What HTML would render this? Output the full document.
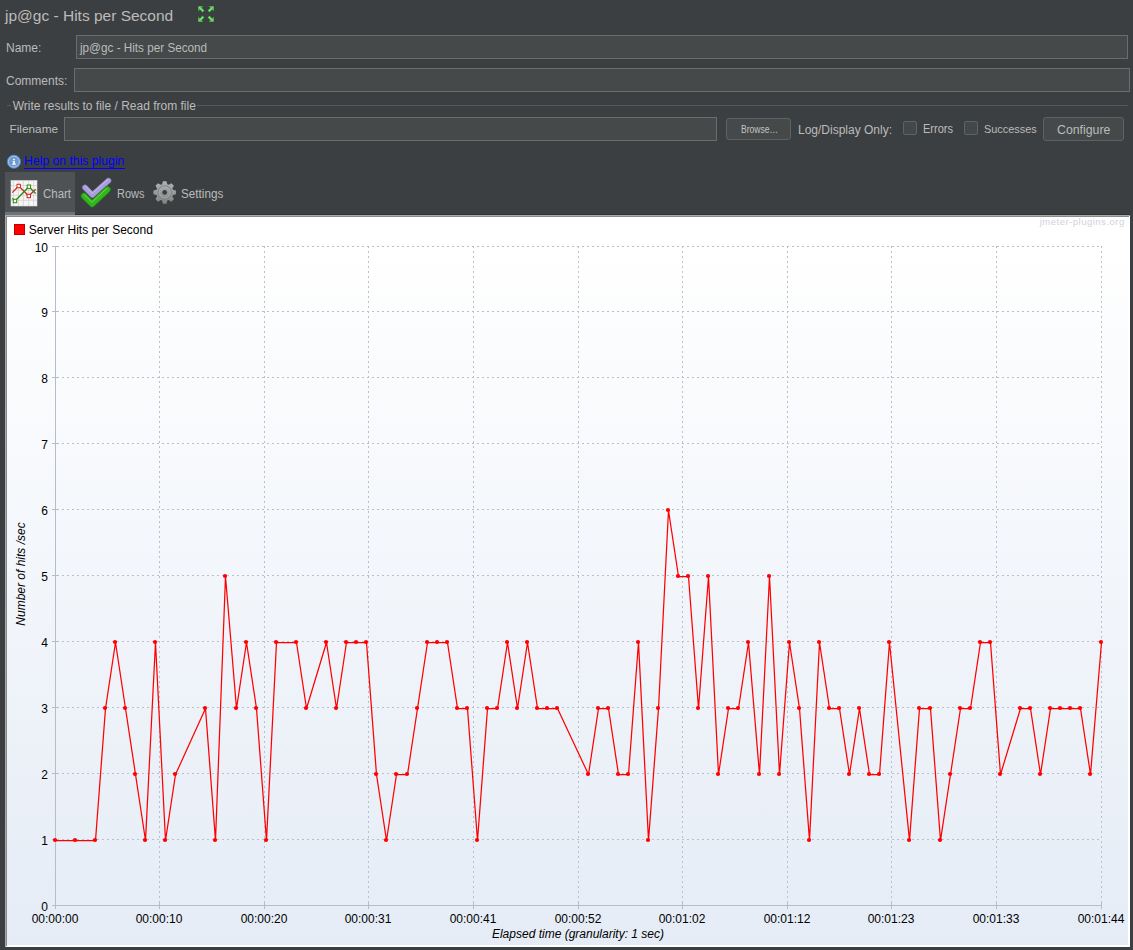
<!DOCTYPE html><html><head><meta charset="utf-8"><style>
html,body{margin:0;padding:0;}
body{width:1133px;height:950px;background:#3c3f41;position:relative;overflow:hidden;font-family:"Liberation Sans", sans-serif;}
.t{position:absolute;white-space:nowrap;}
.b{position:absolute;box-sizing:border-box;}
svg{position:absolute;left:0;top:0;}
</style></head><body>
<div class="t" style="left:5px;top:7.78px;font-size:15.5px;line-height:15.5px;color:#bbbbbb;">jp@gc - Hits per Second</div>
<svg width="1133" height="30" style="left:0;top:0">
<g fill="#5ccb5c" stroke="#2f3a30" stroke-width="0.4">
<path d="M198,6 H203.5 L201.8,7.8 L204.5,10.5 L202.5,12.5 L199.8,9.8 L198,11.5 Z"/>
<path d="M214,6 H208.5 L210.2,7.8 L207.5,10.5 L209.5,12.5 L212.2,9.8 L214,11.5 Z"/>
<path d="M198,22 H203.5 L201.8,20.2 L204.5,17.5 L202.5,15.5 L199.8,18.2 L198,16.5 Z"/>
<path d="M214,22 H208.5 L210.2,20.2 L207.5,17.5 L209.5,15.5 L212.2,18.2 L214,16.5 Z"/>
</g>
<g stroke="#b8ecb0" stroke-width="1" opacity="0.55" stroke-linecap="round">
<line x1="199.5" y1="7.5" x2="202.8" y2="10.8"/>
<line x1="212.5" y1="7.5" x2="209.2" y2="10.8"/>
<line x1="199.5" y1="20.5" x2="202.8" y2="17.2"/>
<line x1="212.5" y1="20.5" x2="209.2" y2="17.2"/>
</g></svg>
<div class="t" style="left:6px;top:41.84px;font-size:12px;line-height:12px;color:#bbbbbb;">Name:</div>
<div class="b" style="left:76px;top:35px;width:1052px;height:24px;background:#45494a;border:1px solid #6b6d6d;"></div>
<div class="t" style="left:80.3px;top:41.84px;font-size:12px;line-height:12px;color:#bbbbbb;transform-origin:0 0;transform:scaleX(0.976);">jp@gc - Hits per Second</div>
<div class="t" style="left:6px;top:74.84px;font-size:12px;line-height:12px;color:#bbbbbb;">Comments:</div>
<div class="b" style="left:74px;top:68px;width:1056px;height:24px;background:#45494a;border:1px solid #6b6d6d;"></div>
<div class="b" style="left:7px;top:105px;width:4px;height:1px;background:#56595b;"></div>
<div class="b" style="left:197px;top:105px;width:931px;height:1px;background:#56595b;"></div>
<div class="t" style="left:12.7px;top:99.94px;font-size:12px;line-height:12px;color:#bbbbbb;">Write results to file / Read from file</div>
<div class="t" style="left:9.5px;top:124.01px;font-size:11.8px;line-height:11.8px;color:#bbbbbb;">Filename</div>
<div class="b" style="left:64px;top:117px;width:653px;height:24px;background:#45494a;border:1px solid #6b6d6d;"></div>
<div class="b" style="left:726px;top:118px;width:65px;height:22px;background:#45494a;border:1px solid #5e6262;border-radius:3px;"></div>
<div class="t" style="left:740.5px;top:124.58px;font-size:10.3px;line-height:10.3px;color:#c4c4c4;transform-origin:0 0;transform:scaleX(0.83);">Browse…</div>
<div class="t" style="left:798px;top:124.24px;font-size:12px;line-height:12px;color:#bbbbbb;">Log/Display Only:</div>
<div class="b" style="left:903px;top:121px;width:14px;height:14px;background:#43494a;border:1px solid #5f6363;border-radius:2px;"></div>
<div class="t" style="left:923px;top:123.04px;font-size:12px;line-height:12px;color:#bbbbbb;transform-origin:0 0;transform:scaleX(0.92);">Errors</div>
<div class="b" style="left:964px;top:121px;width:14px;height:14px;background:#43494a;border:1px solid #5f6363;border-radius:2px;"></div>
<div class="t" style="left:984px;top:123.97px;font-size:10.9px;line-height:10.9px;color:#bbbbbb;">Successes</div>
<div class="b" style="left:1043px;top:117px;width:81px;height:24px;background:#45494a;border:1px solid #5e6262;border-radius:3px;"></div>
<div class="t" style="left:1057px;top:123.69px;font-size:12.3px;line-height:12.3px;color:#bbbbbb;">Configure</div>
<svg width="30" height="30" style="left:0;top:147px">
<circle cx="13.9" cy="14.7" r="6.6" fill="#6f9ad0" stroke="#4a86d0" stroke-width="0.9"/>
<circle cx="13.9" cy="14.7" r="5.5" fill="none" stroke="#b9cbe6" stroke-width="0.9"/>
<rect x="13.1" y="11.8" width="1.7" height="1.3" fill="#fff"/>
<rect x="13.2" y="13.9" width="1.6" height="3.5" fill="#fff"/>
<rect x="12.1" y="16.6" width="3.8" height="1" fill="#fff"/>
<rect x="12.6" y="13.9" width="1" height="0.8" fill="#fff"/>
</svg>
<div class="t" style="left:24.1px;top:155.17px;font-size:12.2px;line-height:12.2px;color:#0000ff;">Help on this plugin</div>
<div class="b" style="left:24px;top:168px;width:101px;height:1px;background:#0000ff;"></div>
<div class="b" style="left:5px;top:172px;width:70px;height:40px;background:#4e5254;"></div>
<div class="b" style="left:5px;top:212px;width:70px;height:3px;background:#6e737a;"></div>
<div class="b" style="left:75px;top:214px;width:1055px;height:1px;background:#2f3133;"></div>
<svg width="40" height="40" style="left:0;top:170px">
<rect x="11" y="10.5" width="26" height="25.5" fill="#f6f6f6" stroke="#dcdcdc" stroke-width="0.6"/>
<g stroke="#d2d2d2" stroke-width="0.8">
<line x1="13.4" y1="10.5" x2="13.4" y2="36"/><line x1="18.4" y1="10.5" x2="18.4" y2="36"/><line x1="23.4" y1="10.5" x2="23.4" y2="36"/><line x1="28.6" y1="10.5" x2="28.6" y2="36"/><line x1="33.6" y1="10.5" x2="33.6" y2="36"/>
<line x1="11" y1="15.5" x2="37" y2="15.5"/><line x1="11" y1="20.3" x2="37" y2="20.3"/><line x1="11" y1="25.3" x2="37" y2="25.3"/><line x1="11" y1="30.3" x2="37" y2="30.3"/>
</g>
<polyline points="12.3,22.6 18.7,16 28.8,26 35.6,19.2" fill="none" stroke="#d42a1e" stroke-width="1.3"/>
<polyline points="12.3,28.2 15,31 28.9,16.7 35.7,23.5" fill="none" stroke="#2e8a10" stroke-width="1.3"/>
<rect x="17" y="14.3" width="3.4" height="3.4" fill="#fff" stroke="#d42a1e" stroke-width="1"/>
<rect x="27.1" y="24.3" width="3.4" height="3.4" fill="#fff" stroke="#d42a1e" stroke-width="1"/>
<rect x="13.3" y="29.3" width="3.4" height="3.4" fill="#fffff0" stroke="#2e8a10" stroke-width="1"/>
<rect x="27.2" y="15" width="3.4" height="3.4" fill="#fffff0" stroke="#2e8a10" stroke-width="1"/>
</svg>
<div class="t" style="left:42.6px;top:187.84px;font-size:12px;line-height:12px;color:#bbbbbb;transform-origin:0 0;transform:scaleX(0.955);">Chart</div>
<svg width="120" height="40" style="left:0;top:170px">
<polyline points="85,17.5 92.4,25 108.5,10.6" fill="none" stroke="#8f84c4" stroke-width="5.6" stroke-linecap="round" stroke-linejoin="round"/>
<polyline points="85,17.5 92.4,25 108.5,10.6" fill="none" stroke="#a99ddb" stroke-width="4.4" stroke-linecap="round" stroke-linejoin="round"/>
<polyline points="85.2,16 92.4,23.4 107.8,9.6" fill="none" stroke="#d8d2f2" stroke-width="0.8" stroke-linecap="round" stroke-linejoin="round" opacity="0.8"/>
<polyline points="84,26 92,34 107.5,19.5" fill="none" stroke="#178a0c" stroke-width="6.6" stroke-linecap="round" stroke-linejoin="round"/>
<polyline points="84,26 92,34 107.5,19.5" fill="none" stroke="#35b420" stroke-width="5.2" stroke-linecap="round" stroke-linejoin="round"/>
<polyline points="84.2,24.4 92,32.2 106.6,18.6" fill="none" stroke="#8ee07a" stroke-width="0.8" stroke-linecap="round" stroke-linejoin="round" opacity="0.8"/>
</svg>
<div class="t" style="left:116.5px;top:187.84px;font-size:12px;line-height:12px;color:#bbbbbb;transform-origin:0 0;transform:scaleX(0.915);">Rows</div>
<svg width="200" height="40" style="left:0;top:170px">
<defs><linearGradient id="gg" x1="0" y1="0" x2="0" y2="1"><stop offset="0" stop-color="#b0b3b3"/><stop offset="1" stop-color="#7f8483"/></linearGradient></defs>
<path d="M162.16,14.18 L162.88,11.15 L166.52,11.15 L167.24,14.18 L168.71,14.79 L171.37,13.16 L173.94,15.73 L172.31,18.39 L172.92,19.86 L175.95,20.58 L175.95,24.22 L172.92,24.94 L172.31,26.41 L173.94,29.07 L171.37,31.64 L168.71,30.01 L167.24,30.62 L166.52,33.65 L162.88,33.65 L162.16,30.62 L160.69,30.01 L158.03,31.64 L155.46,29.07 L157.09,26.41 L156.48,24.94 L153.45,24.22 L153.45,20.58 L156.48,19.86 L157.09,18.39 L155.46,15.73 L158.03,13.16 L160.69,14.79 Z" fill="url(#gg)"/>
<circle cx="164.7" cy="22.400000000000006" r="6.6" fill="none" stroke="#767a7a" stroke-width="0.9"/>
<circle cx="164.7" cy="22.400000000000006" r="5.6" fill="none" stroke="#b4b7b7" stroke-width="0.6"/>
<circle cx="164.7" cy="22.400000000000006" r="2.4" fill="#3c3f41"/>
</svg>
<div class="t" style="left:181px;top:187.84px;font-size:12px;line-height:12px;color:#bbbbbb;transform-origin:0 0;transform:scaleX(0.975);">Settings</div>
<div class="b" style="left:5px;top:215px;width:1125px;height:732px;background:#ffffff;"></div>
<div class="b" style="left:5px;top:215px;width:1125px;height:1px;background:#a9a9a9;"></div>
<div class="b" style="left:5px;top:216px;width:1124px;height:1px;background:#8a8a8a;"></div>
<div class="b" style="left:5px;top:215px;width:1px;height:732px;background:#a9a9a9;"></div>
<div class="b" style="left:6px;top:216px;width:1px;height:730px;background:#8a8a8a;"></div>
<div class="b" style="left:7px;top:242px;width:1121px;height:703px;background:linear-gradient(#ffffff,#e5ecf6);"></div>
<svg width="1133" height="950" style="left:0;top:0">
<line x1="62" y1="246.5" x2="1101" y2="246.5" stroke="#b9c0cb" stroke-width="1" stroke-dasharray="2 3"/>
<line x1="62" y1="311.5" x2="1101" y2="311.5" stroke="#b9c0cb" stroke-width="1" stroke-dasharray="2 3"/>
<line x1="62" y1="377.5" x2="1101" y2="377.5" stroke="#b9c0cb" stroke-width="1" stroke-dasharray="2 3"/>
<line x1="62" y1="443.5" x2="1101" y2="443.5" stroke="#b9c0cb" stroke-width="1" stroke-dasharray="2 3"/>
<line x1="62" y1="509.5" x2="1101" y2="509.5" stroke="#b9c0cb" stroke-width="1" stroke-dasharray="2 3"/>
<line x1="62" y1="575.5" x2="1101" y2="575.5" stroke="#b9c0cb" stroke-width="1" stroke-dasharray="2 3"/>
<line x1="62" y1="641.5" x2="1101" y2="641.5" stroke="#b9c0cb" stroke-width="1" stroke-dasharray="2 3"/>
<line x1="62" y1="707.5" x2="1101" y2="707.5" stroke="#b9c0cb" stroke-width="1" stroke-dasharray="2 3"/>
<line x1="62" y1="773.5" x2="1101" y2="773.5" stroke="#b9c0cb" stroke-width="1" stroke-dasharray="2 3"/>
<line x1="62" y1="839.5" x2="1101" y2="839.5" stroke="#b9c0cb" stroke-width="1" stroke-dasharray="2 3"/>
<line x1="159.5" y1="246" x2="159.5" y2="905" stroke="#b9c0cb" stroke-width="1" stroke-dasharray="2 3"/>
<line x1="264.5" y1="246" x2="264.5" y2="905" stroke="#b9c0cb" stroke-width="1" stroke-dasharray="2 3"/>
<line x1="368.5" y1="246" x2="368.5" y2="905" stroke="#b9c0cb" stroke-width="1" stroke-dasharray="2 3"/>
<line x1="473.5" y1="246" x2="473.5" y2="905" stroke="#b9c0cb" stroke-width="1" stroke-dasharray="2 3"/>
<line x1="578.5" y1="246" x2="578.5" y2="905" stroke="#b9c0cb" stroke-width="1" stroke-dasharray="2 3"/>
<line x1="682.5" y1="246" x2="682.5" y2="905" stroke="#b9c0cb" stroke-width="1" stroke-dasharray="2 3"/>
<line x1="787.5" y1="246" x2="787.5" y2="905" stroke="#b9c0cb" stroke-width="1" stroke-dasharray="2 3"/>
<line x1="891.5" y1="246" x2="891.5" y2="905" stroke="#b9c0cb" stroke-width="1" stroke-dasharray="2 3"/>
<line x1="996.5" y1="246" x2="996.5" y2="905" stroke="#b9c0cb" stroke-width="1" stroke-dasharray="2 3"/>
<line x1="1101.5" y1="246" x2="1101.5" y2="905" stroke="#b9c0cb" stroke-width="1" stroke-dasharray="2 3"/>
<line x1="55.5" y1="246" x2="55.5" y2="909" stroke="#b5bdca" stroke-width="1"/>
<line x1="52" y1="905.5" x2="1102" y2="905.5" stroke="#b5bdca" stroke-width="1"/>
<line x1="52" y1="246.5" x2="59" y2="246.5" stroke="#b5bdca" stroke-width="1"/>
<line x1="52" y1="311.5" x2="59" y2="311.5" stroke="#b5bdca" stroke-width="1"/>
<line x1="52" y1="377.5" x2="59" y2="377.5" stroke="#b5bdca" stroke-width="1"/>
<line x1="52" y1="443.5" x2="59" y2="443.5" stroke="#b5bdca" stroke-width="1"/>
<line x1="52" y1="509.5" x2="59" y2="509.5" stroke="#b5bdca" stroke-width="1"/>
<line x1="52" y1="575.5" x2="59" y2="575.5" stroke="#b5bdca" stroke-width="1"/>
<line x1="52" y1="641.5" x2="59" y2="641.5" stroke="#b5bdca" stroke-width="1"/>
<line x1="52" y1="707.5" x2="59" y2="707.5" stroke="#b5bdca" stroke-width="1"/>
<line x1="52" y1="773.5" x2="59" y2="773.5" stroke="#b5bdca" stroke-width="1"/>
<line x1="52" y1="839.5" x2="59" y2="839.5" stroke="#b5bdca" stroke-width="1"/>
<line x1="52" y1="905.5" x2="59" y2="905.5" stroke="#b5bdca" stroke-width="1"/>
<line x1="55.5" y1="902" x2="55.5" y2="909" stroke="#b5bdca" stroke-width="1"/>
<line x1="159.5" y1="902" x2="159.5" y2="909" stroke="#b5bdca" stroke-width="1"/>
<line x1="264.5" y1="902" x2="264.5" y2="909" stroke="#b5bdca" stroke-width="1"/>
<line x1="368.5" y1="902" x2="368.5" y2="909" stroke="#b5bdca" stroke-width="1"/>
<line x1="473.5" y1="902" x2="473.5" y2="909" stroke="#b5bdca" stroke-width="1"/>
<line x1="578.5" y1="902" x2="578.5" y2="909" stroke="#b5bdca" stroke-width="1"/>
<line x1="682.5" y1="902" x2="682.5" y2="909" stroke="#b5bdca" stroke-width="1"/>
<line x1="787.5" y1="902" x2="787.5" y2="909" stroke="#b5bdca" stroke-width="1"/>
<line x1="891.5" y1="902" x2="891.5" y2="909" stroke="#b5bdca" stroke-width="1"/>
<line x1="996.5" y1="902" x2="996.5" y2="909" stroke="#b5bdca" stroke-width="1"/>
<line x1="1101.5" y1="902" x2="1101.5" y2="909" stroke="#b5bdca" stroke-width="1"/>
<polyline fill="none" stroke="#ff0000" stroke-width="1.25" stroke-linejoin="round" points="55.5,840.5 75.5,840.5 95.5,840.5 105.5,708.5 115.5,642.5 125.5,708.5 135.5,774.5 145.5,840.5 155.5,642.5 165.5,840.5 175.5,774.5 205.5,708.5 215.5,840.5 225.5,576.5 236.5,708.5 246.5,642.5 256.5,708.5 266.5,840.5 276.5,642.5 296.5,642.5 306.5,708.5 326.5,642.5 336.5,708.5 346.5,642.5 356.5,642.5 366.5,642.5 376.5,774.5 386.5,840.5 396.5,774.5 407.5,774.5 417.5,708.5 427.5,642.5 437.5,642.5 447.5,642.5 457.5,708.5 467.5,708.5 477.5,840.5 487.5,708.5 497.5,708.5 507.5,642.5 517.5,708.5 527.5,642.5 537.5,708.5 547.5,708.5 557.5,708.5 588.5,774.5 598.5,708.5 608.5,708.5 618.5,774.5 628.5,774.5 638.5,642.5 648.5,840.5 658.5,708.5 668.5,510.5 678.5,576.5 688.5,576.5 698.5,708.5 708.5,576.5 718.5,774.5 728.5,708.5 738.5,708.5 748.5,642.5 759.5,774.5 769.5,576.5 779.5,774.5 789.5,642.5 799.5,708.5 809.5,840.5 819.5,642.5 829.5,708.5 839.5,708.5 849.5,774.5 859.5,708.5 869.5,774.5 879.5,774.5 889.5,642.5 909.5,840.5 919.5,708.5 930.5,708.5 940.5,840.5 950.5,774.5 960.5,708.5 970.5,708.5 980.5,642.5 990.5,642.5 1000.5,774.5 1020.5,708.5 1030.5,708.5 1040.5,774.5 1050.5,708.5 1060.5,708.5 1070.5,708.5 1080.5,708.5 1090.5,774.5 1101.5,642.5"/>
<circle cx="55" cy="840" r="2.1" fill="#ff0000"/>
<circle cx="75" cy="840" r="2.1" fill="#ff0000"/>
<circle cx="95" cy="840" r="2.1" fill="#ff0000"/>
<circle cx="105" cy="708" r="2.1" fill="#ff0000"/>
<circle cx="115" cy="642" r="2.1" fill="#ff0000"/>
<circle cx="125" cy="708" r="2.1" fill="#ff0000"/>
<circle cx="135" cy="774" r="2.1" fill="#ff0000"/>
<circle cx="145" cy="840" r="2.1" fill="#ff0000"/>
<circle cx="155" cy="642" r="2.1" fill="#ff0000"/>
<circle cx="165" cy="840" r="2.1" fill="#ff0000"/>
<circle cx="175" cy="774" r="2.1" fill="#ff0000"/>
<circle cx="205" cy="708" r="2.1" fill="#ff0000"/>
<circle cx="215" cy="840" r="2.1" fill="#ff0000"/>
<circle cx="225" cy="576" r="2.1" fill="#ff0000"/>
<circle cx="236" cy="708" r="2.1" fill="#ff0000"/>
<circle cx="246" cy="642" r="2.1" fill="#ff0000"/>
<circle cx="256" cy="708" r="2.1" fill="#ff0000"/>
<circle cx="266" cy="840" r="2.1" fill="#ff0000"/>
<circle cx="276" cy="642" r="2.1" fill="#ff0000"/>
<circle cx="296" cy="642" r="2.1" fill="#ff0000"/>
<circle cx="306" cy="708" r="2.1" fill="#ff0000"/>
<circle cx="326" cy="642" r="2.1" fill="#ff0000"/>
<circle cx="336" cy="708" r="2.1" fill="#ff0000"/>
<circle cx="346" cy="642" r="2.1" fill="#ff0000"/>
<circle cx="356" cy="642" r="2.1" fill="#ff0000"/>
<circle cx="366" cy="642" r="2.1" fill="#ff0000"/>
<circle cx="376" cy="774" r="2.1" fill="#ff0000"/>
<circle cx="386" cy="840" r="2.1" fill="#ff0000"/>
<circle cx="396" cy="774" r="2.1" fill="#ff0000"/>
<circle cx="407" cy="774" r="2.1" fill="#ff0000"/>
<circle cx="417" cy="708" r="2.1" fill="#ff0000"/>
<circle cx="427" cy="642" r="2.1" fill="#ff0000"/>
<circle cx="437" cy="642" r="2.1" fill="#ff0000"/>
<circle cx="447" cy="642" r="2.1" fill="#ff0000"/>
<circle cx="457" cy="708" r="2.1" fill="#ff0000"/>
<circle cx="467" cy="708" r="2.1" fill="#ff0000"/>
<circle cx="477" cy="840" r="2.1" fill="#ff0000"/>
<circle cx="487" cy="708" r="2.1" fill="#ff0000"/>
<circle cx="497" cy="708" r="2.1" fill="#ff0000"/>
<circle cx="507" cy="642" r="2.1" fill="#ff0000"/>
<circle cx="517" cy="708" r="2.1" fill="#ff0000"/>
<circle cx="527" cy="642" r="2.1" fill="#ff0000"/>
<circle cx="537" cy="708" r="2.1" fill="#ff0000"/>
<circle cx="547" cy="708" r="2.1" fill="#ff0000"/>
<circle cx="557" cy="708" r="2.1" fill="#ff0000"/>
<circle cx="588" cy="774" r="2.1" fill="#ff0000"/>
<circle cx="598" cy="708" r="2.1" fill="#ff0000"/>
<circle cx="608" cy="708" r="2.1" fill="#ff0000"/>
<circle cx="618" cy="774" r="2.1" fill="#ff0000"/>
<circle cx="628" cy="774" r="2.1" fill="#ff0000"/>
<circle cx="638" cy="642" r="2.1" fill="#ff0000"/>
<circle cx="648" cy="840" r="2.1" fill="#ff0000"/>
<circle cx="658" cy="708" r="2.1" fill="#ff0000"/>
<circle cx="668" cy="510" r="2.1" fill="#ff0000"/>
<circle cx="678" cy="576" r="2.1" fill="#ff0000"/>
<circle cx="688" cy="576" r="2.1" fill="#ff0000"/>
<circle cx="698" cy="708" r="2.1" fill="#ff0000"/>
<circle cx="708" cy="576" r="2.1" fill="#ff0000"/>
<circle cx="718" cy="774" r="2.1" fill="#ff0000"/>
<circle cx="728" cy="708" r="2.1" fill="#ff0000"/>
<circle cx="738" cy="708" r="2.1" fill="#ff0000"/>
<circle cx="748" cy="642" r="2.1" fill="#ff0000"/>
<circle cx="759" cy="774" r="2.1" fill="#ff0000"/>
<circle cx="769" cy="576" r="2.1" fill="#ff0000"/>
<circle cx="779" cy="774" r="2.1" fill="#ff0000"/>
<circle cx="789" cy="642" r="2.1" fill="#ff0000"/>
<circle cx="799" cy="708" r="2.1" fill="#ff0000"/>
<circle cx="809" cy="840" r="2.1" fill="#ff0000"/>
<circle cx="819" cy="642" r="2.1" fill="#ff0000"/>
<circle cx="829" cy="708" r="2.1" fill="#ff0000"/>
<circle cx="839" cy="708" r="2.1" fill="#ff0000"/>
<circle cx="849" cy="774" r="2.1" fill="#ff0000"/>
<circle cx="859" cy="708" r="2.1" fill="#ff0000"/>
<circle cx="869" cy="774" r="2.1" fill="#ff0000"/>
<circle cx="879" cy="774" r="2.1" fill="#ff0000"/>
<circle cx="889" cy="642" r="2.1" fill="#ff0000"/>
<circle cx="909" cy="840" r="2.1" fill="#ff0000"/>
<circle cx="919" cy="708" r="2.1" fill="#ff0000"/>
<circle cx="930" cy="708" r="2.1" fill="#ff0000"/>
<circle cx="940" cy="840" r="2.1" fill="#ff0000"/>
<circle cx="950" cy="774" r="2.1" fill="#ff0000"/>
<circle cx="960" cy="708" r="2.1" fill="#ff0000"/>
<circle cx="970" cy="708" r="2.1" fill="#ff0000"/>
<circle cx="980" cy="642" r="2.1" fill="#ff0000"/>
<circle cx="990" cy="642" r="2.1" fill="#ff0000"/>
<circle cx="1000" cy="774" r="2.1" fill="#ff0000"/>
<circle cx="1020" cy="708" r="2.1" fill="#ff0000"/>
<circle cx="1030" cy="708" r="2.1" fill="#ff0000"/>
<circle cx="1040" cy="774" r="2.1" fill="#ff0000"/>
<circle cx="1050" cy="708" r="2.1" fill="#ff0000"/>
<circle cx="1060" cy="708" r="2.1" fill="#ff0000"/>
<circle cx="1070" cy="708" r="2.1" fill="#ff0000"/>
<circle cx="1080" cy="708" r="2.1" fill="#ff0000"/>
<circle cx="1090" cy="774" r="2.1" fill="#ff0000"/>
<circle cx="1101" cy="642" r="2.1" fill="#ff0000"/>
</svg>
<div class="t" style="left:0;width:48px;text-align:right;top:241.59px;font-size:12px;line-height:12px;color:#000">10</div>
<div class="t" style="left:0;width:48px;text-align:right;top:306.59px;font-size:12px;line-height:12px;color:#000">9</div>
<div class="t" style="left:0;width:48px;text-align:right;top:372.59px;font-size:12px;line-height:12px;color:#000">8</div>
<div class="t" style="left:0;width:48px;text-align:right;top:438.59px;font-size:12px;line-height:12px;color:#000">7</div>
<div class="t" style="left:0;width:48px;text-align:right;top:504.59px;font-size:12px;line-height:12px;color:#000">6</div>
<div class="t" style="left:0;width:48px;text-align:right;top:570.59px;font-size:12px;line-height:12px;color:#000">5</div>
<div class="t" style="left:0;width:48px;text-align:right;top:636.59px;font-size:12px;line-height:12px;color:#000">4</div>
<div class="t" style="left:0;width:48px;text-align:right;top:702.59px;font-size:12px;line-height:12px;color:#000">3</div>
<div class="t" style="left:0;width:48px;text-align:right;top:768.59px;font-size:12px;line-height:12px;color:#000">2</div>
<div class="t" style="left:0;width:48px;text-align:right;top:834.59px;font-size:12px;line-height:12px;color:#000">1</div>
<div class="t" style="left:0;width:48px;text-align:right;top:900.59px;font-size:12px;line-height:12px;color:#000">0</div>
<div class="t" style="left:5px;width:100px;text-align:center;top:912.64px;font-size:12px;line-height:12px;color:#000">00:00:00</div>
<div class="t" style="left:109px;width:100px;text-align:center;top:912.64px;font-size:12px;line-height:12px;color:#000">00:00:10</div>
<div class="t" style="left:214px;width:100px;text-align:center;top:912.64px;font-size:12px;line-height:12px;color:#000">00:00:20</div>
<div class="t" style="left:318px;width:100px;text-align:center;top:912.64px;font-size:12px;line-height:12px;color:#000">00:00:31</div>
<div class="t" style="left:423px;width:100px;text-align:center;top:912.64px;font-size:12px;line-height:12px;color:#000">00:00:41</div>
<div class="t" style="left:528px;width:100px;text-align:center;top:912.64px;font-size:12px;line-height:12px;color:#000">00:00:52</div>
<div class="t" style="left:632px;width:100px;text-align:center;top:912.64px;font-size:12px;line-height:12px;color:#000">00:01:02</div>
<div class="t" style="left:737px;width:100px;text-align:center;top:912.64px;font-size:12px;line-height:12px;color:#000">00:01:12</div>
<div class="t" style="left:841px;width:100px;text-align:center;top:912.64px;font-size:12px;line-height:12px;color:#000">00:01:23</div>
<div class="t" style="left:946px;width:100px;text-align:center;top:912.64px;font-size:12px;line-height:12px;color:#000">00:01:33</div>
<div class="t" style="left:1051px;width:100px;text-align:center;top:912.64px;font-size:12px;line-height:12px;color:#000">00:01:44</div>
<div class="t" style="left:378px;width:400px;text-align:center;top:928.34px;font-size:12px;line-height:12px;color:#000;font-style:italic">Elapsed time (granularity: 1 sec)</div>
<div class="t" style="left:21px;top:574.4px;font-size:12px;line-height:12px;color:#000;font-style:italic;transform:translate(-50%,-50%) rotate(-90deg)">Number of hits /sec</div>
<div class="b" style="left:14px;top:224px;width:11px;height:11px;background:#ff0000;border:1px solid #c00000;"></div>
<div class="t" style="left:28.8px;top:223.64px;font-size:12px;line-height:12px;color:#000;">Server Hits per Second</div>
<div class="t" style="left:1039.7px;top:217.06px;font-size:9.5px;line-height:9.5px;color:#cfd3db;letter-spacing:0.5px;">jmeter-plugins.org</div>
</body></html>
